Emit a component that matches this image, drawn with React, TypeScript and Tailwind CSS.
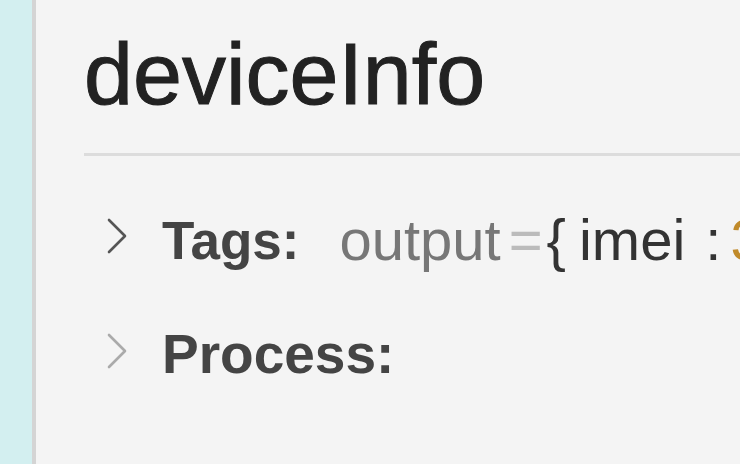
import React from "react";

function Chevron({ color }: { color: string }) {
  return (
    <svg width="22" height="36" viewBox="0 0 22 36" className="shrink-0 mb-[8px]">
      <path d="M3 2 L19 18 L3 34" fill="none" stroke={color} strokeWidth="2.6" strokeLinecap="round" strokeLinejoin="round" />
    </svg>
  );
}

export default function App() {
  return (
    <div
      className="w-[740px] h-[464px] flex overflow-hidden"
      style={{ fontFamily: '"Liberation Sans", Arial, sans-serif' }}
    >
      <div className="w-[32px] shrink-0 bg-[#d3eff0]" />
      <div className="w-[4px] shrink-0 bg-[#d4d4d4]" />
      <div className="flex-1 bg-[#f4f4f4] pl-[48px] overflow-hidden">
        <h1 className="text-[88px] leading-none text-[#222222] pt-[30px] pb-[35px] whitespace-nowrap [-webkit-text-stroke:1px_#222222]">
          deviceInfo
        </h1>
        <div className="h-[3px] bg-[#dcdcdc]" />
        <div className="pl-[22px] pt-[55px] flex flex-col gap-[58px]">
          <div className="flex items-center whitespace-nowrap">
            <Chevron color="#555555" />
            <span className="ml-[34px] text-[53px] leading-none font-bold text-[#444444]">Tags:</span>
            <span className="ml-[40px] text-[58px] leading-none text-[#777777]">output</span>
            <span className="ml-[8px] text-[58px] leading-none text-[#bbbbbb]">=</span>
            <span className="ml-[4px] text-[58px] leading-none text-[#333333]">{"{"}</span>
            <span className="ml-[13px] text-[58px] leading-none text-[#333333]">imei</span>
            <span className="ml-[20px] text-[58px] leading-none text-[#333333]">:</span>
            <span className="ml-[9px] text-[58px] leading-none text-[#c08a2a]">3</span>
          </div>
          <div className="flex items-center whitespace-nowrap">
            <Chevron color="#aaaaaa" />
            <span className="ml-[34px] text-[55px] leading-none font-bold text-[#444444]">Process:</span>
          </div>
        </div>
      </div>
    </div>
  );
}
